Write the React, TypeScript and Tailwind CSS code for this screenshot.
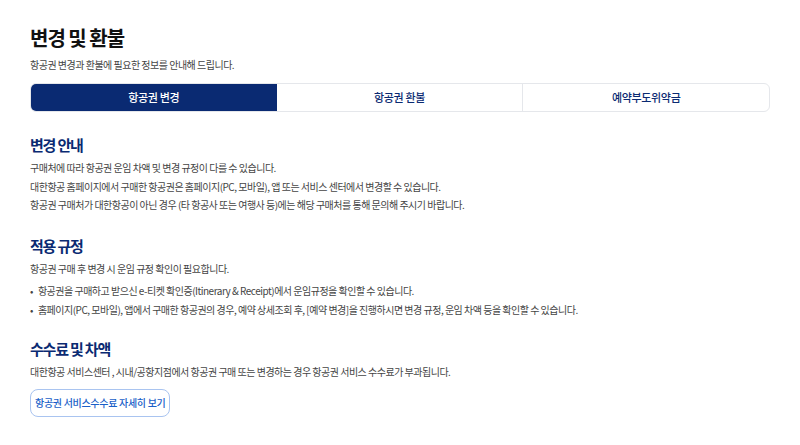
import React from "react";

const font = { fontFamily: '"Noto Sans CJK KR", "Noto Sans", sans-serif' };

export default function App() {
  return (
    <div className="w-[800px] h-[445px] bg-white overflow-hidden" style={font}>
      <div className="px-[30px] pt-[24px]">
        <h1 className="text-[20px] leading-[28px] font-bold text-[#111111] tracking-[-0.05em]">변경 및 환불</h1>
        <p className="mt-[6px] text-[10px] leading-[14px] text-[#444444] tracking-[-0.05em]">항공권 변경과 환불에 필요한 정보를 안내해 드립니다.</p>

        <div className="mt-[11px] flex h-[29px] w-[740px] rounded-[6px] border border-[#e5e7eb] overflow-hidden">
          <div className="flex-1 flex items-center justify-center bg-[#0a2a72] text-white text-[11px] font-medium tracking-[-0.03em]">항공권 변경</div>
          <div className="flex-1 flex items-center justify-center text-[#0a2a72] text-[11px] font-medium tracking-[-0.03em] border-r border-[#e5e7eb]">항공권 환불</div>
          <div className="flex-1 flex items-center justify-center text-[#0a2a72] text-[11px] font-medium tracking-[-0.03em]">예약부도위약금</div>
        </div>

        <section className="mt-[23px]">
          <h2 className="text-[15px] leading-[20px] font-bold text-[#0a2a72] tracking-[-0.08em]">변경 안내</h2>
          <div className="mt-[4px] text-[10px] leading-[18.5px] text-[#444444] tracking-[-0.05em]">
            <p>구매처에 따라 항공권 운임 차액 및 변경 규정이 다를 수 있습니다.</p>
            <p>대한항공 홈페이지에서 구매한 항공권은 홈페이지(PC, 모바일), 앱 또는 서비스 센터에서 변경할 수 있습니다.</p>
            <p>항공권 구매처가 대한항공이 아닌 경우 (타 항공사 또는 여행사 등)에는 해당 구매처를 통해 문의해 주시기 바랍니다.</p>
          </div>
        </section>

        <section className="mt-[21px]">
          <h2 className="text-[15px] leading-[20px] font-bold text-[#0a2a72] tracking-[-0.08em]">적용 규정</h2>
          <p className="mt-[4px] text-[10px] leading-[18.5px] text-[#444444] tracking-[-0.05em]">항공권 구매 후 변경 시 운임 규정 확인이 필요합니다.</p>
          <ul className="mt-[4px] text-[10px] leading-[18.5px] text-[#444444] tracking-[-0.05em]">
            <li className="flex gap-[5px]"><span>•</span><span>항공권을 구매하고 받으신 e-티켓 확인증(Itinerary &amp; Receipt)에서 운임규정을 확인할 수 있습니다.</span></li>
            <li className="flex gap-[5px]"><span>•</span><span>홈페이지(PC, 모바일), 앱에서 구매한 항공권의 경우, 예약 상세조회 후, [예약 변경]을 진행하시면 변경 규정, 운임 차액 등을 확인할 수 있습니다.</span></li>
          </ul>
        </section>

        <section className="mt-[20px]">
          <h2 className="text-[15px] leading-[20px] font-bold text-[#0a2a72] tracking-[-0.08em]">수수료 및 차액</h2>
          <p className="mt-[4px] text-[10px] leading-[18.5px] text-[#444444] tracking-[-0.05em]">대한항공 서비스센터 , 시내/공항지점에서 항공권 구매 또는 변경하는 경우 항공권 서비스 수수료가 부과됩니다.</p>
          <button className="mt-[7px] h-[28px] px-[4px] rounded-[8px] border border-[#a9c4f0] text-[#1a5fc8] text-[10px] font-medium tracking-[-0.03em]">항공권 서비스수수료 자세히 보기</button>
        </section>
      </div>
    </div>
  );
}
